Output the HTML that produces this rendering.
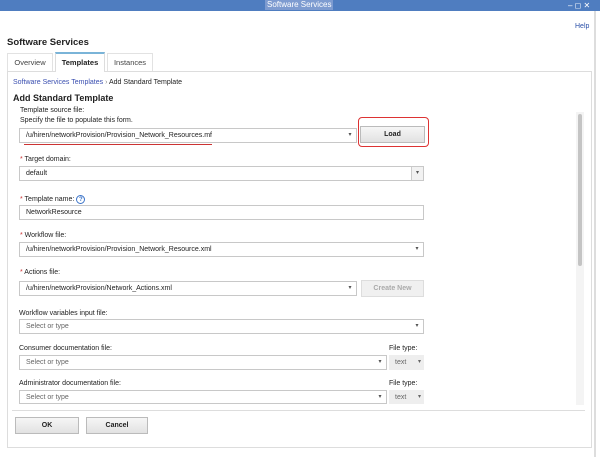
<!DOCTYPE html>
<html><head><style>
*{box-sizing:border-box;margin:0;padding:0}
body{width:600px;height:457px;background:#fff;font-family:"Liberation Sans",sans-serif;font-size:7.5px;color:#222;position:relative;overflow:hidden}
.a{position:absolute}
.inp{position:absolute;border:1px solid #c8c8c8;background:#fff;height:15px;padding-left:6px;line-height:13px;font-size:7px;color:#222}
.ph{color:#666}
.arr{position:absolute;right:0;top:0;width:12px;height:13px;font-size:6px;text-align:center;line-height:13px;color:#555}
.btn{position:absolute;border:1px solid #bbb;background:linear-gradient(#f6f6f6,#e2e2e2);text-align:center;font-weight:bold;font-size:7px;line-height:15px;height:17px}
.lbl{position:absolute;font-size:7px;color:#222}
.req{color:#c33}
</style></head><body>
<div class="a" style="left:0;top:0;width:600px;height:11px;background:#4f7dc0"></div>
<div class="a" style="left:265px;top:0;font-size:8px;color:#fff;background:#7d9bd0;padding:0 2px;line-height:10px">Software Services</div>
<div class="a" style="left:568px;top:1px;color:#fff;font-size:8px;line-height:9px">– ◻ ✕</div>
<div class="a" style="left:594px;top:11px;width:2px;height:446px;background:#ddd"></div>
<div class="a" style="left:575px;top:23px;color:#2a4fa8;font-size:7px">Help</div>
<div class="a" style="left:7px;top:37px;font-weight:bold;font-size:9.5px">Software Services</div>
<div class="a" style="left:7px;top:71px;width:585px;height:377px;border:1px solid #ddd"></div>
<div class="a" style="left:7px;top:53px;width:46px;height:18px;border:1px solid #e2e2e2;border-bottom:none;text-align:center;line-height:17px;color:#444">Overview</div>
<div class="a" style="left:55px;top:52px;width:50px;height:20px;border:1px solid #ddd;border-top:2px solid #7ab4d8;border-bottom:none;background:#fff;text-align:center;line-height:17px;font-weight:bold">Templates</div>
<div class="a" style="left:107px;top:53px;width:46px;height:18px;border:1px solid #e2e2e2;border-bottom:none;text-align:center;line-height:17px;color:#444">Instances</div>
<div class="a" style="left:13px;top:79px;font-size:7px"><span style="color:#3a4fb0">Software Services Templates</span> <span style="color:#888">›</span> Add Standard Template</div>
<div class="a" style="left:13px;top:93px;font-weight:bold;font-size:9px">Add Standard Template</div>
<div class="lbl" style="left:20px;top:107px">Template source file:</div>
<div class="lbl" style="left:20px;top:117px">Specify the file to populate this form.</div>
<div class="inp" style="left:19px;top:128px;width:338px">/u/hiren/networkProvision/Provision_Network_Resources.mf<span class="arr">▾</span></div>
<div class="a" style="left:24px;top:144px;width:188px;height:1px;background:#c33"></div>
<div class="btn" style="left:360px;top:126px;width:65px">Load</div>
<div class="a" style="left:358px;top:117px;width:71px;height:30px;border:1px solid #d33;border-radius:4px"></div>
<div class="lbl" style="left:20px;top:156px"><span class="req">*</span> Target domain:</div>
<div class="inp" style="left:19px;top:166px;width:405px">default<span class="arr" style="border-left:1px solid #ccc;background:#f2f2f2">▾</span></div>
<div class="lbl" style="left:20px;top:195px"><span class="req">*</span> Template name: <span style="display:inline-block;width:9px;height:9px;border:1px solid #3a73c8;border-radius:50%;color:#3a73c8;font-size:6px;text-align:center;line-height:8px;font-weight:bold">?</span></div>
<div class="inp" style="left:19px;top:205px;width:405px">NetworkResource</div>
<div class="lbl" style="left:20px;top:232px"><span class="req">*</span> Workflow file:</div>
<div class="inp" style="left:19px;top:242px;width:405px">/u/hiren/networkProvision/Provision_Network_Resource.xml<span class="arr">▾</span></div>
<div class="lbl" style="left:20px;top:269px"><span class="req">*</span> Actions file:</div>
<div class="inp" style="left:19px;top:281px;width:338px">/u/hiren/networkProvision/Network_Actions.xml<span class="arr">▾</span></div>
<div class="btn" style="left:361px;top:280px;width:63px;color:#aaa;border-color:#ddd;background:#f0f0f0">Create New</div>
<div class="lbl" style="left:19px;top:310px">Workflow variables input file:</div>
<div class="inp ph" style="left:19px;top:319px;width:405px">Select or type<span class="arr">▾</span></div>
<div class="lbl" style="left:19px;top:345px">Consumer documentation file:</div>
<div class="lbl" style="left:389px;top:345px">File type:</div>
<div class="inp ph" style="left:19px;top:355px;width:368px">Select or type<span class="arr">▾</span></div>
<div class="a" style="left:389px;top:355px;width:35px;height:15px;background:#eee;color:#666;font-size:7px;line-height:15px;padding-left:6px">text<span style="position:absolute;right:3px;font-size:6px">▾</span></div>
<div class="lbl" style="left:19px;top:380px">Administrator documentation file:</div>
<div class="lbl" style="left:389px;top:380px">File type:</div>
<div class="inp ph" style="left:19px;top:390px;width:368px;height:14px">Select or type<span class="arr">▾</span></div>
<div class="a" style="left:389px;top:390px;width:35px;height:14px;background:#eee;color:#666;font-size:7px;line-height:15px;padding-left:6px">text<span style="position:absolute;right:3px;font-size:6px">▾</span></div>
<div class="a" style="left:576px;top:112px;width:8px;height:293px;background:#f4f4f4"></div>
<div class="a" style="left:578px;top:114px;width:4px;height:152px;background:#c4c4c4;border-radius:2px"></div>
<div class="a" style="left:12px;top:410px;width:573px;height:1px;background:#ddd"></div>
<div class="btn" style="left:15px;top:417px;width:64px">OK</div>
<div class="btn" style="left:86px;top:417px;width:62px">Cancel</div>
</body></html>
